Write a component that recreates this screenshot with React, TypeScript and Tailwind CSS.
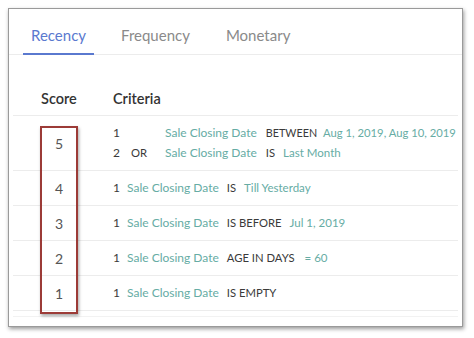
import React from "react";

const teal = "text-[#66aca4]";
const dark = "text-[#3a3a3a]";

function Field() {
  return <span className={`${teal} text-[12px]`}>Sale Closing Date</span>;
}

function SingleRow({ score, op, value, valueGap = "ml-[8px]" }: { score: string; op: string; value?: string; valueGap?: string }) {
  return (
    <div className="flex h-[35px] items-center border-b border-[#ececec]">
      <div className="w-[100px] shrink-0">
        <div className="ml-[27px] w-[38px] text-center text-[14px] text-[#555]">{score}</div>
      </div>
      <div className="flex items-baseline whitespace-nowrap text-[11.25px]">
        <span className={`${dark} w-[14px] text-[12px]`}>1</span>
        <Field />
        <span className={`${dark} ml-[8px]`}>{op}</span>
        {value && <span className={`${teal} ${valueGap} text-[11.5px]`}>{value}</span>}
      </div>
    </div>
  );
}

export default function App() {
  return (
    <div className="h-[338px] w-[474px] bg-white pl-[8px] pt-[8px]" style={{ fontFamily: "Lato, 'Open Sans', sans-serif" }}>
      <div className="h-[319px] w-[455px] overflow-hidden border border-[#9a9a9a] bg-white shadow-[1px_2px_4px_rgba(0,0,0,0.4)]">
        {/* Tabs */}
        <div className="flex h-[46px] gap-[18px] border-b border-[#ececec] pl-[14px]">
          <div className="-mb-px flex h-[46px] items-start border-b-2 border-[#5a79cf] px-[8px] pt-[17px] text-[15px] leading-[18px] text-[#5a79cf]">
            Recency
          </div>
          <div className="flex h-[46px] items-start px-[9px] pt-[17px] text-[15px] leading-[18px] text-[#8a8a8a]">
            Frequency
          </div>
          <div className="flex h-[46px] items-start px-[9px] pt-[17px] text-[15px] leading-[18px] text-[#8a8a8a]">
            Monetary
          </div>
        </div>

        {/* Table */}
        <div className="mx-[4px] mt-[27px]">
          <div className="flex h-[34px] items-center border-b border-[#ececec] text-[14.5px] font-semibold text-[#333]">
            <div className="w-[100px] shrink-0 pl-[28px]">Score</div>
            <div>Criteria</div>
          </div>

          <div className="relative">
            <div className="flex h-[55px] items-center border-b border-[#ececec]">
              <div className="w-[100px] shrink-0">
                <div className="ml-[27px] w-[38px] text-center text-[14px] text-[#555]">5</div>
              </div>
              <div className="flex flex-col whitespace-nowrap text-[11.25px] leading-[20px]">
                <div className="flex items-baseline">
                  <span className={`${dark} w-[18px] shrink-0 text-[12px]`}>1</span>
                  <span className="w-[34px] shrink-0"></span>
                  <Field />
                  <span className={`${dark} ml-[9px] text-[10.75px]`}>BETWEEN</span>
                  <span className={`${teal} ml-[6px] text-[11.25px]`}>Aug 1, 2019, Aug 10, 2019</span>
                </div>
                <div className="flex items-baseline">
                  <span className={`${dark} w-[18px] shrink-0 text-[12px]`}>2</span>
                  <span className={`${dark} w-[34px] shrink-0`}>OR</span>
                  <Field />
                  <span className={`${dark} ml-[9px]`}>IS</span>
                  <span className={`${teal} ml-[8px] text-[11.5px]`}>Last Month</span>
                </div>
              </div>
            </div>
            <SingleRow score="4" op="IS" value="Till Yesterday" />
            <SingleRow score="3" op="IS BEFORE" value="Jul 1, 2019" />
            <SingleRow score="2" op="AGE IN DAYS" value="= 60" valueGap="ml-[10px]" />
            <SingleRow score="1" op="IS EMPTY" />
            <div className="h-[6px] border-b border-[#f2f2f2]"></div>

            <div className="pointer-events-none absolute left-[27px] top-[10px] h-[188px] w-[38px] border-2 border-[#9c3b37] shadow-[1px_2px_3px_rgba(0,0,0,0.35)]"></div>
          </div>
        </div>
      </div>
    </div>
  );
}
